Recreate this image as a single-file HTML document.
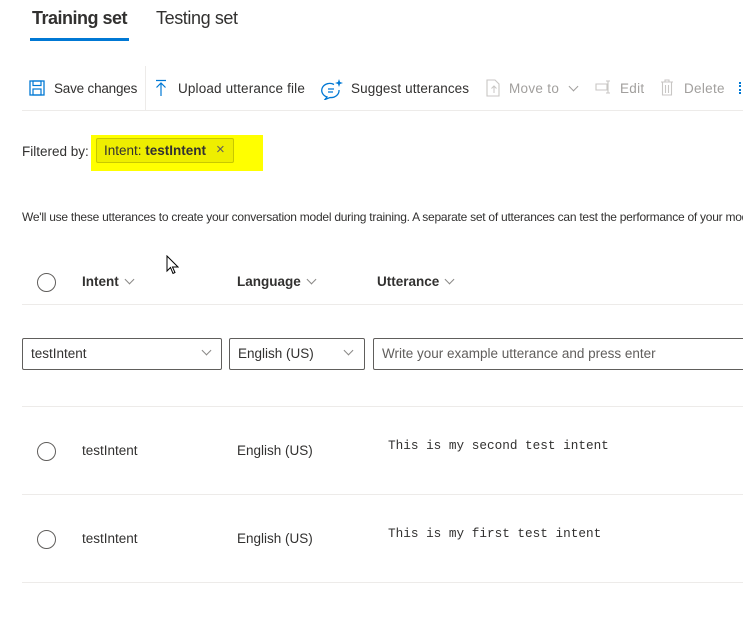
<!DOCTYPE html>
<html><head><meta charset="utf-8"><style>
*{margin:0;padding:0;box-sizing:border-box}
body{width:743px;height:633px;overflow:hidden;background:#fff;font-family:"Liberation Sans",sans-serif;color:#323130;position:relative}
.a{position:absolute;white-space:nowrap}
.t{font-size:13.5px;letter-spacing:0}
.hl{height:1px;background:#edebe9;position:absolute}
.circ{position:absolute;width:19px;height:19px;border:1.3px solid #605e5c;border-radius:50%}
.chev{display:inline-block;width:7px;height:7px;border-right:1px solid #8a8886;border-bottom:1px solid #8a8886;transform:rotate(45deg);margin-left:7px;position:relative;top:-3px}
.sch{position:absolute;width:7px;height:7px;border-right:1px solid #8a8886;border-bottom:1px solid #8a8886;transform:rotate(45deg)}
.box{position:absolute;border:1px solid #605e5c;border-radius:2px;height:32px}
.mono{font-family:"Liberation Mono",monospace;font-size:12.7px;color:#323130}
.dis{color:#a19f9d}
</style></head><body>
<div class="a" style="left:32px;top:8px;font-size:18px;font-weight:bold;color:#323130;letter-spacing:-0.5px">Training set</div>
<div class="a" style="left:156px;top:8px;font-size:18px;color:#323130;letter-spacing:-0.4px">Testing set</div>
<div class="a" style="left:30px;top:38px;width:99px;height:3px;background:#0078d4"></div>

<svg class="a" style="left:29px;top:80px" width="16" height="16" viewBox="0 0 16 16"><rect x="1" y="1" width="14" height="14" fill="none" stroke="#0078d4" stroke-width="1.3"/><rect x="4" y="1" width="8" height="4.5" fill="none" stroke="#0078d4" stroke-width="1.2"/><rect x="4" y="9" width="8" height="6" fill="none" stroke="#0078d4" stroke-width="1.2"/></svg>
<div class="a t" style="left:54px;top:81px;letter-spacing:-0.2px">Save changes</div>
<div class="a" style="left:145px;top:66px;width:1px;height:44px;background:#edebe9"></div>
<svg class="a" style="left:154px;top:79px" width="14" height="18" viewBox="0 0 14 18"><path d="M2 1.5h10M7 4v13M2.5 8.5L7 4l4.5 4.5" fill="none" stroke="#0078d4" stroke-width="1.2"/></svg>
<div class="a t" style="left:178px;top:81px;letter-spacing:0.15px">Upload utterance file</div>
<svg class="a" style="left:321px;top:78px" width="24" height="22" viewBox="0 0 24 22"><path d="M13 6.5A8 7 0 1 0 6 19l-2 2.5 5-2A8 7 0 0 0 18 12" fill="none" stroke="#0078d4" stroke-width="1.3"/><path d="M7 11h6M7 14h5" stroke="#0078d4" stroke-width="1.3"/><path d="M18 1l1 3 3 1-3 1-1 3-1-3-3-1 3-1z" fill="#0078d4"/></svg>
<div class="a t" style="left:351px;top:81px;letter-spacing:0.1px">Suggest utterances</div>
<svg class="a" style="left:486px;top:79px" width="14" height="18" viewBox="0 0 14 18"><path d="M1 1h8l4 4v12H1z" fill="none" stroke="#c8c6c4" stroke-width="1.1"/><path d="M8 14V7M5.5 9.5L8 7l2.5 2.5" fill="none" stroke="#c8c6c4"/></svg>
<div class="a t dis" style="left:509px;top:81px;letter-spacing:0.3px">Move to</div>
<span class="sch" style="left:570px;top:83px;border-color:#a19f9d"></span>
<svg class="a" style="left:595px;top:80px" width="18" height="14" viewBox="0 0 18 14"><path d="M1 4h11v6H1zM13 1v12M11 1h4M11 13h4" fill="none" stroke="#c8c6c4" stroke-width="1.1"/></svg>
<div class="a t dis" style="left:620px;top:81px;letter-spacing:0.3px">Edit</div>
<svg class="a" style="left:660px;top:79px" width="14" height="17" viewBox="0 0 14 17"><path d="M1 3h12M5 3V1h4v2M2.5 3v13h9V3M5.5 6v8M8.5 6v8" fill="none" stroke="#c8c6c4" stroke-width="1.1"/></svg>
<div class="a t dis" style="left:684px;top:81px;letter-spacing:0.3px">Delete</div>
<div class="a" style="left:739px;top:82px;width:3px;height:12px;border-left:2px dotted #0078d4"></div>
<div class="hl" style="left:22px;top:110px;width:721px"></div>

<div class="a t" style="left:22px;top:144px;color:#323130">Filtered by:</div>
<div class="a" style="left:91px;top:135px;width:172px;height:36px;background:#ffff00"></div>
<div class="a" style="left:96px;top:138px;width:138px;height:25px;background:#eeee00;border:1px solid #c8c800;border-radius:2px"></div>
<div class="a t" style="left:104px;top:143px">Intent: <b>testIntent</b></div>
<div class="a" style="left:216px;top:142px;font-size:15px;line-height:16px;color:#605e5c">×</div>

<div class="a" style="left:22px;top:210px;font-size:12px;letter-spacing:-0.25px;color:#323130">We'll use these utterances to create your conversation model during training. A separate set of utterances can test the performance of your model.</div>

<svg class="a" style="left:166px;top:255px" width="13" height="20" viewBox="0 0 13 20"><path d="M1 1v15l3.5-3.5 2.5 6 2-1-2.5-5.5H12z" fill="#fff" stroke="#000" stroke-width="1"/></svg>

<div class="circ" style="left:37px;top:273px"></div>
<div class="a t" style="left:82px;top:274px;font-weight:bold">Intent<span class="chev"></span></div>
<div class="a t" style="left:237px;top:274px;font-weight:bold">Language<span class="chev"></span></div>
<div class="a t" style="left:377px;top:274px;font-weight:bold">Utterance<span class="chev"></span></div>
<div class="hl" style="left:22px;top:304px;width:721px"></div>

<div class="box" style="left:22px;top:338px;width:200px"></div>
<div class="a t" style="left:31px;top:346px">testIntent</div>
<span class="sch" style="left:203px;top:347px"></span>
<div class="box" style="left:229px;top:338px;width:136px"></div>
<div class="a t" style="left:238px;top:346px">English (US)</div>
<span class="sch" style="left:345px;top:347px"></span>
<div class="box" style="left:373px;top:338px;width:380px"></div>
<div class="a t" style="left:382px;top:346px;color:#605e5c">Write your example utterance and press enter</div>
<div class="hl" style="left:22px;top:406px;width:721px"></div>

<div class="circ" style="left:37px;top:442px"></div>
<div class="a t" style="left:82px;top:443px">testIntent</div>
<div class="a t" style="left:237px;top:443px">English (US)</div>
<div class="a mono" style="left:388px;top:438px">This is my second test intent</div>
<div class="hl" style="left:22px;top:494px;width:721px"></div>

<div class="circ" style="left:37px;top:530px"></div>
<div class="a t" style="left:82px;top:531px">testIntent</div>
<div class="a t" style="left:237px;top:531px">English (US)</div>
<div class="a mono" style="left:388px;top:526px">This is my first test intent</div>
<div class="hl" style="left:22px;top:582px;width:721px"></div>
</body></html>
